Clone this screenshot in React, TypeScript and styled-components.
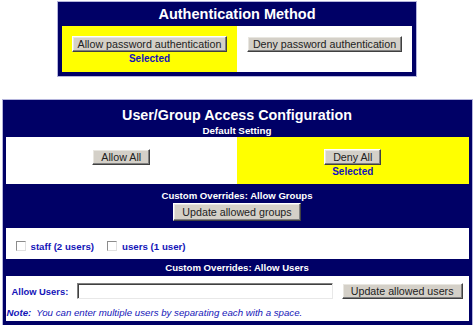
import React from 'react';
import styled, { createGlobalStyle } from 'styled-components';

const NAVY = '#000066';
const BLUE = '#1414b8';

const GlobalStyle = createGlobalStyle`
  html, body {
    margin: 0;
    padding: 0;
    background: #ffffff;
  }
  body {
    font-family: "Liberation Sans", Arial, sans-serif;
  }
`;

const Page = styled.div`
  display: flex;
  flex-direction: column;
  align-items: center;
  padding-top: 2px;
  gap: 24px;
  width: 474px;
`;

const Panel = styled.div<{ $width: number; $side: number }>`
  box-sizing: border-box;
  width: ${(p) => p.$width}px;
  padding: 0 ${(p) => p.$side}px 4px;
  background: ${NAVY};
  box-shadow: 0 0 0 1px #b4b4dc;
  display: flex;
  flex-direction: column;
`;

const PanelTitle = styled.div<{ $pad: number; $size: number }>`
  color: #ffffff;
  font-weight: bold;
  font-size: ${(p) => p.$size}px;
  text-align: center;
  padding-top: ${(p) => p.$pad}px;
  line-height: 19px;
  height: ${(p) => 24 - p.$pad}px;
`;

const SubTitle = styled.div`
  color: #ffffff;
  font-weight: bold;
  font-size: 9.8px;
  text-align: center;
  line-height: 14px;
  height: 13px;
`;

const ChoiceRow = styled.div<{ $height: number }>`
  display: flex;
  height: ${(p) => p.$height}px;
  background: #ffffff;
`;

const ChoiceCell = styled.div<{ $selected?: boolean; $top: number }>`
  flex: 1;
  display: flex;
  flex-direction: column;
  align-items: center;
  gap: 2px;
  padding-top: ${(p) => p.$top}px;
  background: ${(p) => (p.$selected ? '#ffff00' : '#ffffff')};
`;

const SelectedNote = styled.div`
  color: ${BLUE};
  font-weight: bold;
  font-size: 10px;
  line-height: 10px;
`;

const Button = styled.button<{ $pad?: number; $h?: number }>`
  box-sizing: border-box;
  height: ${(p) => p.$h ?? 17}px;
  padding: 0 ${(p) => p.$pad ?? 8}px;
  margin: 0;
  font-family: "Liberation Sans", Arial, sans-serif;
  font-size: 10.7px;
  color: #222222;
  background: #d4d0c8;
  border: 1px solid;
  border-color: #ffffff #404040 #404040 #ffffff;
  box-shadow: inset -1px -1px 0 #808080, inset 1px 1px 0 #e8e6e0;
  white-space: nowrap;
  cursor: pointer;
`;

const Band = styled.div<{ $height: number }>`
  display: flex;
  flex-direction: column;
  align-items: center;
  height: ${(p) => p.$height}px;
`;

const BandLabel = styled.div<{ $top: number }>`
  color: #ffffff;
  font-weight: bold;
  font-size: 9.6px;
  line-height: 13px;
  padding-top: ${(p) => p.$top}px;
  margin-bottom: 1px;
`;

const GroupRow = styled.div`
  display: flex;
  align-items: center;
  gap: 13px;
  height: 26px;
  padding: 5px 10px 0;
  background: #ffffff;
`;

const GroupOption = styled.label`
  display: flex;
  align-items: center;
  gap: 5px;
  color: ${BLUE};
  font-weight: bold;
  font-size: 9.7px;
`;

const Check = styled.input`
  appearance: none;
  box-sizing: border-box;
  width: 10px;
  height: 10px;
  margin: 0;
  background: #ffffff;
  border: 1px solid;
  border-color: #8c8c8c #e0e0e0 #e0e0e0 #8c8c8c;
`;

const UsersBlock = styled.div`
  background: #ffffff;
  height: 45px;
  display: flex;
  flex-direction: column;
`;

const UsersRow = styled.div`
  display: flex;
  align-items: center;
  gap: 9px;
  padding: 7px 6px 0;
`;

const FieldLabel = styled.label`
  color: ${BLUE};
  font-weight: bold;
  font-size: 9.4px;
  width: 56px;
  white-space: nowrap;
`;

const TextField = styled.input`
  box-sizing: border-box;
  width: 257px;
  height: 16px;
  margin: 0;
  padding: 0 2px;
  border: 1px solid;
  border-color: #808080 #e8e8e8 #e8e8e8 #808080;
  box-shadow: inset 1px 1px 0 #404040;
  background: #ffffff;
`;

const Note = styled.div`
  color: ${BLUE};
  font-style: italic;
  font-size: 9.7px;
  line-height: 16px;
  padding: 6px 0 0 1px;
  white-space: nowrap;

  b {
    font-weight: bold;
    margin-right: 5px;
  }
`;

export default function App() {
  return (
    <>
      <GlobalStyle />
      <Page>
        <Panel $width={358} $side={4}>
          <PanelTitle $pad={3} $size={14.5}>
            Authentication Method
          </PanelTitle>
          <ChoiceRow $height={46}>
            <ChoiceCell $selected $top={10}>
              <Button $pad={5} $h={16}>Allow password authentication</Button>
              <SelectedNote>Selected</SelectedNote>
            </ChoiceCell>
            <ChoiceCell $top={10}>
              <Button $pad={5} $h={16}>Deny password authentication</Button>
            </ChoiceCell>
          </ChoiceRow>
        </Panel>

        <Panel $width={469} $side={3}>
          <PanelTitle $pad={6} $size={14.3}>
            User/Group Access Configuration
          </PanelTitle>
          <SubTitle>Default Setting</SubTitle>
          <ChoiceRow $height={47}>
            <ChoiceCell $top={12}>
              <Button $h={16}>Allow All</Button>
            </ChoiceCell>
            <ChoiceCell $selected $top={12}>
              <Button $h={16}>Deny All</Button>
              <SelectedNote>Selected</SelectedNote>
            </ChoiceCell>
          </ChoiceRow>
          <Band $height={44}>
            <BandLabel $top={5}>Custom Overrides: Allow Groups</BandLabel>
            <Button $h={18}>Update allowed groups</Button>
          </Band>
          <GroupRow>
            <GroupOption>
              <Check type="checkbox" />
              staff (2 users)
            </GroupOption>
            <GroupOption>
              <Check type="checkbox" />
              users (1 user)
            </GroupOption>
          </GroupRow>
          <Band $height={17}>
            <BandLabel $top={2}>Custom Overrides: Allow Users</BandLabel>
          </Band>
          <UsersBlock>
            <UsersRow>
              <FieldLabel>Allow Users:</FieldLabel>
              <TextField type="text" />
              <Button $h={16}>Update allowed users</Button>
            </UsersRow>
            <Note>
              <b>Note:</b>You can enter multiple users by separating each with a space.
            </Note>
          </UsersBlock>
        </Panel>
      </Page>
    </>
  );
}
